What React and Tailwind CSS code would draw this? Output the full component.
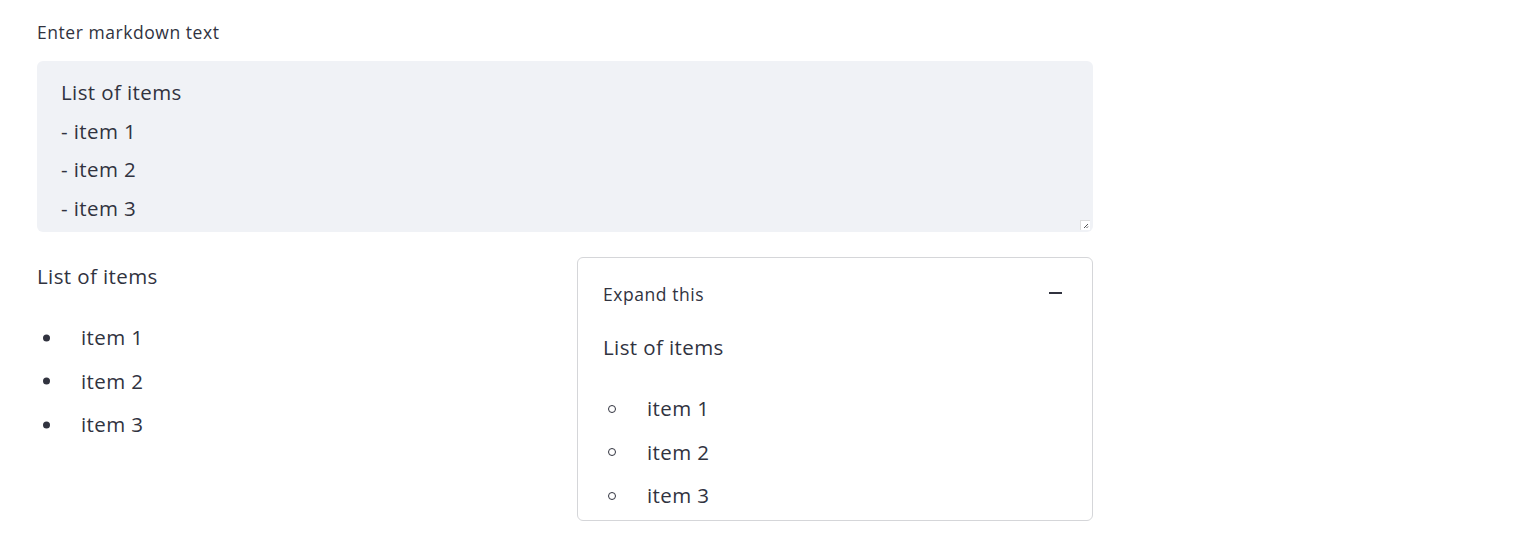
import React from "react";

const font = { fontFamily: '"Source Sans Pro", "Open Sans", "Noto Sans", sans-serif' };

function Bullet({ filled }) {
  return filled ? (
    <span className="block w-[7px] h-[7px] rounded-full bg-[#31333f]" />
  ) : (
    <span className="block w-[8px] h-[8px] rounded-full border border-[#31333f]" />
  );
}

function List({ filled, bulletLeft, textLeft }) {
  return (
    <ul className="mt-[24px]">
      {["item 1", "item 2", "item 3"].map((t) => (
        <li key={t} className="relative h-[43.5px] flex items-center text-[20.5px] tracking-[0.4px]">
          <span className="absolute top-1/2 -translate-y-1/2" style={{ left: bulletLeft }}>
            <Bullet filled={filled} />
          </span>
          <span style={{ marginLeft: textLeft }}>{t}</span>
        </li>
      ))}
    </ul>
  );
}

export default function App() {
  return (
    <div className="w-[1515px] h-[544px] bg-white text-[#31333f]" style={font}>
      <div className="w-[1056px] ml-[37px] pt-[20px]">
        <div className="h-[24px] leading-[24px] text-[17.5px] tracking-[0.55px]">Enter markdown text</div>
        <div className="relative mt-[17px]">
          <textarea
            spellCheck={false}
            readOnly
            className="block w-full h-[171px] bg-[#f0f2f6] rounded-[6px] pl-[24px] pr-[12px] pt-[12px] text-[20.5px] tracking-[0.4px] leading-[38.5px] text-[#31333f] outline-none resize-none"
            style={font}
            defaultValue={"List of items\n- item 1\n- item 2\n- item 3"}
          />
          <span className="absolute right-[3px] bottom-[2px] w-[10px] h-[10px] bg-white border-l border-t border-[#dcdcdc]">
            <svg width="9" height="9" viewBox="0 0 9 9" className="block">
              <path d="M7 3 L3 7 M7 5.5 L5.5 7" stroke="#555" strokeWidth="1" />
            </svg>
          </span>
        </div>
        <div className="mt-[25px] grid grid-cols-2 gap-[24px]">
          <div>
            <p className="mt-[3px] text-[20.5px] tracking-[0.4px] leading-[32px]">List of items</p>
            <List filled bulletLeft={6} textLeft={44} />
          </div>
          <div className="border border-[#d5d6d9] rounded-[6px] h-[264px]">
            <div className="h-[72px] flex items-center justify-between pl-[25px] pr-[30px]">
              <span className="text-[17.5px] tracking-[0.55px]">Expand this</span>
              <span className="block w-[13px] h-[2px] bg-[#31333f] -mt-[2px]" />
            </div>
            <div className="pl-[25px]">
              <p className="mt-[1px] text-[20.5px] tracking-[0.4px] leading-[32px]">List of items</p>
              <List bulletLeft={5} textLeft={44} />
            </div>
          </div>
        </div>
      </div>
    </div>
  );
}
